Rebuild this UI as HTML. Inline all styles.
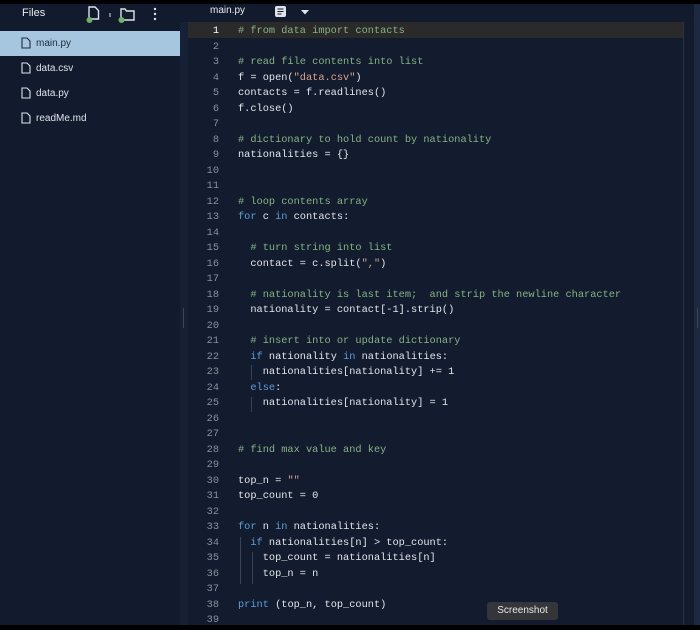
<!DOCTYPE html>
<html><head><style>
body{margin:0;width:700px;height:630px;background:#000;position:relative;overflow:hidden;font-family:"Liberation Sans",sans-serif}
#top{position:absolute;left:0;top:4px;width:700px;height:18px;background:#121a2d}
#side{position:absolute;left:0;top:22px;width:180px;height:603px;background:#121a2d}
#gap{position:absolute;left:180px;top:22px;width:8px;height:603px;background:#172136}
#ed{position:absolute;left:188px;top:22px;width:506px;height:603px;background:#131b2f}
#rs{position:absolute;left:694px;top:4px;width:6px;height:621px;background:#1d2940}
#cur{position:absolute;left:188px;top:22px;width:495px;height:16px;background:#2a2a2b}
#vl{position:absolute;left:683px;top:22px;width:1px;height:603px;background:#2a3345}
.row{position:absolute;left:0;width:180px;height:25px;color:#dfe3ea;font-size:10px;line-height:25px}
.row svg{position:absolute;left:21px;top:6px}
.row span.t{position:absolute;left:36px}
#code{position:absolute;left:188px;top:24px;font-family:"Liberation Mono",monospace;font-size:10.3px;line-height:15.5px;color:#e4e6ea;white-space:pre}
.ln{display:inline-block;width:31px;text-align:right;color:#8b909a;margin-right:19px}
.c{color:#86b383}.k{color:#5a9fd6}.s{color:#d9a38a}
.g{position:absolute;width:1px;background:#3a4356}
</style></head><body>
<div id="top"></div><div id="side"></div><div id="gap"></div><div id="ed"></div><div id="rs"></div><div id="cur"></div><div id="vl"></div>
<div style="position:absolute;left:22px;top:7px;color:#e8ebf0;font-size:11px">Files</div>
<svg style="position:absolute;left:84px;top:5px" width="90" height="20" viewBox="0 0 90 20" fill="none" stroke="#dfe3ea" stroke-width="1.4">
<path d="M5 2h6l3.5 3.5V14H5z"/><circle cx="5.5" cy="15" r="3" fill="#6fb06a" stroke="none"/>
<path d="M26 8v4" stroke-width="1"/>
<path d="M37 4h4l1.5 2h7.5v9H37z"/><circle cx="37.5" cy="15" r="3" fill="#6fb06a" stroke="none"/>
<circle cx="71" cy="4" r="1.2" fill="#dfe3ea" stroke="none"/><circle cx="71" cy="9" r="1.2" fill="#dfe3ea" stroke="none"/><circle cx="71" cy="14" r="1.2" fill="#dfe3ea" stroke="none"/>
</svg>
<div style="position:absolute;left:210px;top:5px;color:#e8ebf0;font-size:10px">main.py</div>
<svg style="position:absolute;left:274px;top:5px" width="40" height="14"><rect x="1" y="1" width="11" height="11" rx="2" fill="#dfe3ea"/><path d="M3.5 4h6M3.5 6.5h6M3.5 9h4" stroke="#121a2d" stroke-width="1"/><path d="M27 5h8l-4 4.5z" fill="#dfe3ea"/></svg>
<div class="row" style="top:31px;background:#a6c6e0;color:#1d2a3c"><svg width="10" height="12"><path d="M1 1h5l3 3v7H1z" fill="none" stroke="#1d2a3c" stroke-width="1.1"/></svg><span class="t">main.py</span></div>
<div class="row" style="top:56px"><svg width="10" height="12"><path d="M1 1h5l3 3v7H1z" fill="none" stroke="#dfe3ea" stroke-width="1.1"/></svg><span class="t">data.csv</span></div>
<div class="row" style="top:81px"><svg width="10" height="12"><path d="M1 1h5l3 3v7H1z" fill="none" stroke="#dfe3ea" stroke-width="1.1"/></svg><span class="t">data.py</span></div>
<div class="row" style="top:106px"><svg width="10" height="12"><path d="M1 1h5l3 3v7H1z" fill="none" stroke="#dfe3ea" stroke-width="1.1"/></svg><span class="t">readMe.md</span></div>
<div class="g" style="left:183px;top:308px;height:20px;background:#3a4558"></div>
<div class="g" style="left:697px;top:308px;height:20px;background:#3a4558"></div>
<div class="g" style="left:251px;top:365px;height:15px"></div>
<div class="g" style="left:251px;top:397px;height:15px"></div>
<div class="g" style="left:252px;top:552px;height:32px"></div>
<div class="g" style="left:240px;top:537px;height:47px"></div>
<div id="code"><span class="ln" style="color:#fff">1</span><span class="c"># from data import contacts</span>
<span class="ln">2</span>
<span class="ln">3</span><span class="c"># read file contents into list</span>
<span class="ln">4</span>f = open(<span class="s">"data.csv"</span>)
<span class="ln">5</span>contacts = f.readlines()
<span class="ln">6</span>f.close()
<span class="ln">7</span>
<span class="ln">8</span><span class="c"># dictionary to hold count by nationality</span>
<span class="ln">9</span>nationalities = {}
<span class="ln">10</span>
<span class="ln">11</span>
<span class="ln">12</span><span class="c"># loop contents array</span>
<span class="ln">13</span><span class="k">for</span> c <span class="k">in</span> contacts:
<span class="ln">14</span>
<span class="ln">15</span>  <span class="c"># turn string into list</span>
<span class="ln">16</span>  contact = c.split(<span class="s">","</span>)
<span class="ln">17</span>
<span class="ln">18</span>  <span class="c"># nationality is last item;  and strip the newline character</span>
<span class="ln">19</span>  nationality = contact[-1].strip()
<span class="ln">20</span>
<span class="ln">21</span>  <span class="c"># insert into or update dictionary</span>
<span class="ln">22</span>  <span class="k">if</span> nationality <span class="k">in</span> nationalities:
<span class="ln">23</span>    nationalities[nationality] += 1
<span class="ln">24</span>  <span class="k">else</span>:
<span class="ln">25</span>    nationalities[nationality] = 1
<span class="ln">26</span>
<span class="ln">27</span>
<span class="ln">28</span><span class="c"># find max value and key</span>
<span class="ln">29</span>
<span class="ln">30</span>top_n = <span class="s">""</span>
<span class="ln">31</span>top_count = 0
<span class="ln">32</span>
<span class="ln">33</span><span class="k">for</span> n <span class="k">in</span> nationalities:
<span class="ln">34</span>  <span class="k">if</span> nationalities[n] > top_count:
<span class="ln">35</span>    top_count = nationalities[n]
<span class="ln">36</span>    top_n = n
<span class="ln">37</span>
<span class="ln">38</span><span class="k">print</span> (top_n, top_count)
<span class="ln">39</span></div>
<div style="position:absolute;left:487px;top:602px;width:71px;height:18px;background:#353639;border-radius:3px;color:#e8e8e8;font-size:10px;line-height:18px;text-align:center">Screenshot</div>
<div style="position:absolute;left:0;top:625px;width:700px;height:5px;background:#000"></div>
</body></html>
